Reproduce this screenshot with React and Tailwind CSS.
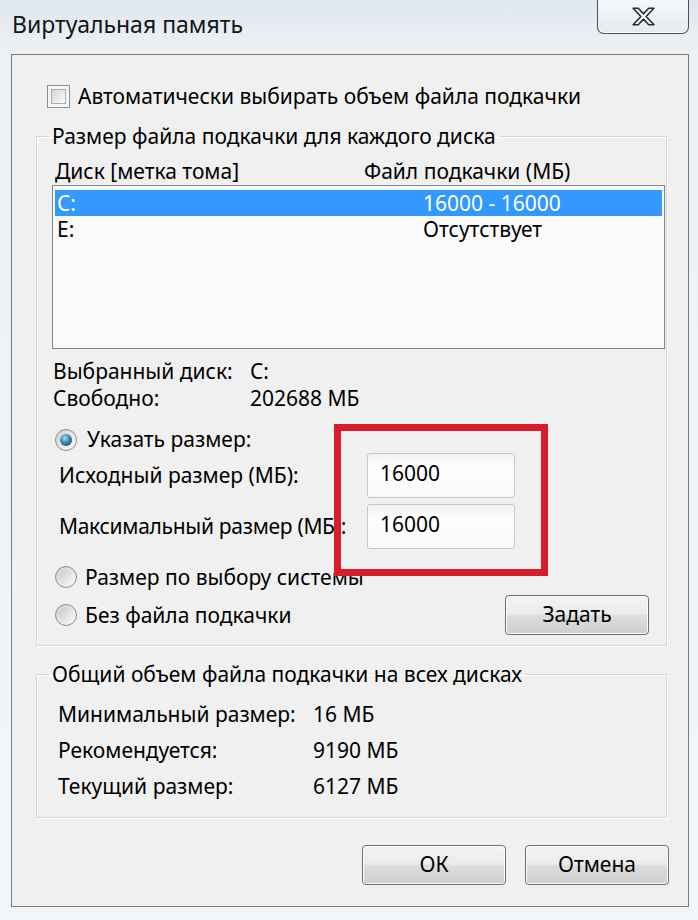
import React from 'react';

const Checkbox = () => (
    <div className="w-[23px] h-[23px] shrink-0 border border-[#8e8f8f] bg-[#f6f6f6] p-[3px]">
        <div className="w-full h-full border border-[#a9adb2] bg-gradient-to-br from-[#d3d6da] to-[#fbfbfb]" />
    </div>
);

const Radio = ({ checked }) => (
    <div className="w-[22px] h-[22px] shrink-0 rounded-full border border-[#8d8d8d] bg-gradient-to-br from-[#cfcfcf] to-[#fbfbfb] flex items-center justify-center">
        {checked ? (
            <div className="w-[12px] h-[12px] rounded-full bg-[radial-gradient(circle_at_40%_35%,#a8dcf2_0%,#3b86a8_45%,#153f55_100%)]" />
        ) : (
            <div className="w-[14px] h-[14px] rounded-full bg-gradient-to-br from-[#c8c8c8] to-[#f8f8f8]" />
        )}
    </div>
);

const WinButton = ({ children, className = '' }) => (
    <button
        className={`h-[40px] w-[144px] rounded-[4px] border border-[#707070] bg-[linear-gradient(#f3f3f3_0%,#ebebeb_48%,#dddddd_52%,#cfcfcf_100%)] shadow-[inset_0_0_0_1px_#fbfbfb] text-[21px] text-black leading-none pb-[2px] ${className}`}
    >
        {children}
    </button>
);

const Field = ({ value }) => (
    <div className="h-[45px] w-[148px] rounded-[3px] border border-[#c6c6c6] bg-[linear-gradient(#f2f2f2,#fdfdfd_30%,#f9f9f9)] flex items-center pl-[12px] pb-[4px]">
        {value}
    </div>
);

export default function App() {
    return (
        <div className="w-[698px] h-[920px] overflow-hidden bg-[linear-gradient(180deg,#dfe6ed_0px,#ecf1f5_50px,#f3f6f9_100%)] font-['Noto_Sans',sans-serif] text-[21px] leading-none text-black tracking-normal">
            {/* title bar */}
            <div className="h-[54px] flex justify-between items-start">
                <div className="pl-[12px] pt-[13px] text-[23px] text-[#151515]">Виртуальная память</div>
                <div className="mr-[9px] w-[92px] h-[34px] rounded-b-[7px] border border-t-0 border-[#4e4e4e] bg-[linear-gradient(#f5f8fb,#e4eaf0)] shadow-[inset_0_-1px_0_#ffffff] flex items-center justify-center">
                    <svg width="25" height="19" viewBox="0 0 24 18">
                        <polygon
                            points="2,1 7,1 12,6.5 17,1 22,1 14.5,9 22,17 17,17 12,11.5 7,17 2,17 9.5,9"
                            fill="#ffffff"
                            stroke="#2b2b2b"
                            strokeWidth="1.5"
                            strokeLinejoin="round"
                        />
                    </svg>
                </div>
            </div>

            {/* client area */}
            <div className="relative ml-[11px] w-[678px] h-[853px] border border-[#7c7c7c] bg-[#f0f0f0]">
                <div className="flex items-center gap-[8px] pl-[35px] mt-[30px]">
                    <Checkbox />
                    <span>Автоматически выбирать объем файла подкачки</span>
                </div>

                {/* per disk */}
                <fieldset className="mt-[16px] ml-[24px] w-[631px] border border-[#d3d7db] shadow-[inset_1px_1px_0_#ffffff,1px_1px_0_#ffffff] pl-[15px] pr-[1px] pb-[10px]">
                    <legend className="-ml-[3px] px-[3px] leading-[24px]">Размер файла подкачки для каждого диска</legend>

                    <div className="grid grid-cols-[309px_1fr] pl-[3px] mt-[11px] h-[24px] items-center">
                        <span>Диск [метка тома]</span>
                        <span>Файл подкачки (МБ)</span>
                    </div>

                    <div className="mt-[2px] h-[164px] w-full border border-[#7f858c] bg-[#fafafa] pt-[4px] px-[2px]">
                        <div className="grid grid-cols-[366px_1fr] pl-[2px] h-[26px] items-center bg-[#3399ff] text-white">
                            <span>C:</span>
                            <span>16000 - 16000</span>
                        </div>
                        <div className="grid grid-cols-[366px_1fr] pl-[2px] h-[26px] items-center">
                            <span>E:</span>
                            <span>Отсутствует</span>
                        </div>
                    </div>

                    <div className="mt-[9px] pl-[1px]">
                        <div className="grid grid-cols-[197px_1fr] h-[27px] items-center">
                            <span>Выбранный диск:</span>
                            <span>C:</span>
                        </div>
                        <div className="grid grid-cols-[197px_1fr] h-[27px] items-center">
                            <span>Свободно:</span>
                            <span>202688 МБ</span>
                        </div>
                    </div>

                    <div className="mt-[14px] flex items-center gap-[10px] pl-[3px] h-[27px]">
                        <Radio checked />
                        <span>Указать размер:</span>
                    </div>

                    <div className="grid grid-cols-[308px_148px] gap-y-[6px] pl-[7px] items-center">
                        <span>Исходный размер (МБ):</span>
                        <Field value="16000" />
                        <span className="tracking-[-0.3px]">Максимальный размер (МБ):</span>
                        <Field value="16000" />
                    </div>

                    <div className="mt-[13px] flex justify-between items-start">
                        <div className="flex flex-col gap-[8px] pl-[3px]">
                            <div className="flex items-center gap-[8px] h-[30px]">
                                <Radio />
                                <span>Размер по выбору системы</span>
                            </div>
                            <div className="flex items-center gap-[8px] h-[30px]">
                                <Radio />
                                <span>Без файла подкачки</span>
                            </div>
                        </div>
                        <WinButton className="mt-[33px] mr-[16px]">Задать</WinButton>
                    </div>
                </fieldset>

                {/* totals */}
                <fieldset className="mt-[16px] ml-[24px] w-[631px] border border-[#d3d7db] shadow-[inset_1px_1px_0_#ffffff,1px_1px_0_#ffffff] pl-[15px] pr-[1px] pb-[13px]">
                    <legend className="-ml-[3px] px-[3px] leading-[24px]">Общий объем файла подкачки на всех дисках</legend>
                    <div className="pt-[10px] pl-[6px]">
                        <div className="grid grid-cols-[255px_1fr] h-[36px] items-center">
                            <span>Минимальный размер:</span>
                            <span>16 МБ</span>
                        </div>
                        <div className="grid grid-cols-[255px_1fr] h-[36px] items-center">
                            <span>Рекомендуется:</span>
                            <span>9190 МБ</span>
                        </div>
                        <div className="grid grid-cols-[255px_1fr] h-[36px] items-center">
                            <span>Текущий размер:</span>
                            <span>6127 МБ</span>
                        </div>
                    </div>
                </fieldset>

                <div className="mt-[27px] mr-[19px] flex justify-end gap-[19px]">
                    <WinButton>ОК</WinButton>
                    <WinButton>Отмена</WinButton>
                </div>

                {/* red annotation frame */}
                <div className="absolute left-[322px] top-[369px] w-[214px] h-[152px] border-[7px] border-[#d81e2c]" />
            </div>
        </div>
    );
}
